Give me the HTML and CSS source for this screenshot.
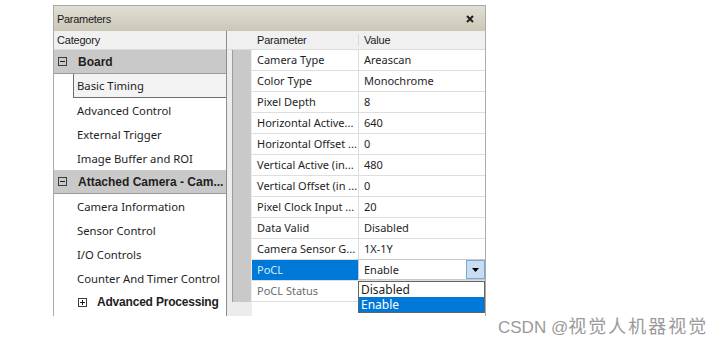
FILE: index.html
```html
<!DOCTYPE html>
<html lang="en">
<head>
    <meta charset="UTF-8">
    <title>Parameters</title>
    <link rel="stylesheet" href="styles.css">
</head>
<body>
    <div class="window">
        <div class="titlebar">
            <span class="title">Parameters</span>
            <svg class="close" width="8" height="8" viewBox="0 0 8 8"><path d="M1 1l6 6M7 1l-6 6" stroke="#222" stroke-width="2"/></svg>
        </div>
        <div class="panes">
            <div class="categories">
                <div class="head">Category</div>
                <div class="tree">
                    <div class="node group">
                        <svg class="toggle" width="9" height="9" viewBox="0 0 9 9"><rect x="0.5" y="0.5" width="8" height="8" fill="none" stroke="#3c3c3c"/><path d="M2 4.5h5" stroke="#1e1e1e"/></svg>
                        <span>Board</span>
                    </div>
                    <div class="node leaf selected">Basic Timing</div>
                    <div class="node leaf">Advanced Control</div>
                    <div class="node leaf">External Trigger</div>
                    <div class="node leaf">Image Buffer and ROI</div>
                    <div class="node group">
                        <svg class="toggle" width="9" height="9" viewBox="0 0 9 9"><rect x="0.5" y="0.5" width="8" height="8" fill="none" stroke="#3c3c3c"/><path d="M2 4.5h5" stroke="#1e1e1e"/></svg>
                        <span>Attached Camera - Cam...</span>
                    </div>
                    <div class="node leaf">Camera Information</div>
                    <div class="node leaf">Sensor Control</div>
                    <div class="node leaf">I/O Controls</div>
                    <div class="node leaf">Counter And Timer Control</div>
                    <div class="node subgroup">
                        <svg class="toggle" width="9" height="9" viewBox="0 0 9 9"><rect x="0.5" y="0.5" width="8" height="8" fill="none" stroke="#3c3c3c"/><path d="M2 4.5h5M4.5 2v5" stroke="#1e1e1e"/></svg>
                        <span>Advanced Processing</span>
                    </div>
                </div>
            </div>

            <div class="params">
                <div class="head">
                    <span class="col-name">Parameter</span>
                    <span class="col-value">Value</span>
                </div>
                <div class="grid-area">
                    <div class="rowheads"></div>
                    <div class="grid">
                        <div class="row"><div class="name">Camera Type</div><div class="value">Areascan</div></div>
                        <div class="row"><div class="name">Color Type</div><div class="value">Monochrome</div></div>
                        <div class="row"><div class="name">Pixel Depth</div><div class="value">8</div></div>
                        <div class="row"><div class="name">Horizontal Active...</div><div class="value">640</div></div>
                        <div class="row"><div class="name">Horizontal Offset ...</div><div class="value">0</div></div>
                        <div class="row"><div class="name">Vertical Active (in...</div><div class="value">480</div></div>
                        <div class="row"><div class="name">Vertical Offset (in ...</div><div class="value">0</div></div>
                        <div class="row"><div class="name">Pixel Clock Input ...</div><div class="value">20</div></div>
                        <div class="row"><div class="name">Data Valid</div><div class="value">Disabled</div></div>
                        <div class="row"><div class="name">Camera Sensor G...</div><div class="value">1X-1Y</div></div>
                        <div class="row active">
                            <div class="name">PoCL</div>
                            <div class="value combo">
                                <span class="combo-text">Enable</span>
                                <span class="combo-btn">
                                    <svg width="7" height="4" viewBox="0 0 7 4"><path d="M0 0h7L3.5 4z" fill="#000"/></svg>
                                </span>
                                <div class="dropdown">
                                    <div class="option">Disabled</div>
                                    <div class="option picked">Enable</div>
                                </div>
                            </div>
                        </div>
                        <div class="row readonly"><div class="name">PoCL Status</div><div class="value"></div></div>
                    </div>
                </div>
            </div>
        </div>
    </div>

    <div class="watermark">CSDN @<span class="cjk">视觉人机器视觉</span></div>
</body>
</html>
```

FILE: styles.css
```css
body {
    margin: 0;
    background: #fff;
    font-family: "Noto Sans", sans-serif;
    font-size: 11px;
    color: #1e1e1e;
}

.window {
    margin: 5px 0 0 53px;
    width: 431px;
    border: 1px solid #ababab;
    border-bottom: none;
}
.titlebar {
    display: flex;
    align-items: center;
    justify-content: space-between;
    height: 25px;
    padding: 0 11px 0 3px;
    background: linear-gradient(#e1ded4, #cbc7b7);
    font-family: "Liberation Sans", sans-serif;
    font-size: 11px;
    letter-spacing: -0.3px;
    color: #1a1a1a;
}

.panes {
    display: flex;
    height: 285px;
}
.head {
    display: flex;
    align-items: center;
    height: 18px;
    background: #f0f0f0;
    border-bottom: 1px solid #dcdcdc;
    font-family: "Liberation Sans", sans-serif;
    font-size: 11px;
    letter-spacing: -0.2px;
    color: #1a1a1a;
}

/* left: category tree */
.categories {
    width: 172px;
    border-right: 1px solid #8c8c8c;
    background: #fff;
}
.categories .head { padding-left: 3px; }
.node {
    display: flex;
    align-items: center;
    height: 24px;
    box-sizing: border-box;
    white-space: nowrap;
    font-size: 11.3px;
}
.node.group {
    background: #c9c9c9;
    border-bottom: 1px solid #9a9a9a;
    padding-left: 4px;
    font-family: "Liberation Sans", sans-serif;
    font-size: 12px;
    font-weight: bold;
}
.node.group .toggle { margin-right: 11px; }
.node.leaf { padding-left: 23px; }
.node.selected {
    margin-left: 19px;
    padding-left: 3px;
    background: #f3f3f3;
    border-left: 1px solid #6e6e6e;
    border-bottom: 1px solid #6e6e6e;
}
.node.subgroup {
    padding-left: 24px;
    font-family: "Liberation Sans", sans-serif;
    font-size: 12px;
    font-weight: bold;
    letter-spacing: -0.2px;
}
.node.subgroup .toggle { margin-right: 10px; }

/* right: property grid */
.params {
    flex: 1;
    background: #fff;
}
.params .head .col-name {
    width: 101px;
    padding-left: 30px;
    border-right: 1px solid #d6d6d6;
}
.params .head .col-value { padding-left: 5px; }
.grid-area {
    display: flex;
    align-items: flex-start;
    padding-left: 5px;
    background: #ececec;
    height: 266px;
}
.rowheads {
    width: 18px;
    height: 252px;
    background: #c9c9c9;
    border-left: 1px solid #9c9c9c;
    border-right: 1px solid #ececec;
}
.grid {
    flex: 1;
    align-self: stretch;
    background: #fff;
}
.row {
    display: flex;
    height: 20px;
    border-bottom: 1px solid #dedede;
    line-height: 20px;
    white-space: nowrap;
}
.name {
    width: 101px;
    padding-left: 5px;
    border-right: 1px solid #dedede;
    overflow: hidden;
}
.value {
    flex: 1;
    padding-left: 5px;
    position: relative;
}
.row.active .name {
    background: #0078d7;
    color: #dcebf8;
}
.row.readonly .name { color: #6d6d6d; }

.combo {
    display: flex;
    justify-content: space-between;
    border: 1px solid #c8c8c8;
    border-right: none;
    margin: -1px 0 0 -1px;
    z-index: 2;
}
.combo-btn {
    display: flex;
    align-items: center;
    justify-content: center;
    width: 17px;
    background: #c8dcf2;
    border: 1px solid #78a8d8;
}
.dropdown {
    position: absolute;
    left: -1px;
    top: 21px;
    width: 125px;
    border: 1px solid #646464;
    background: #fff;
}
.option {
    height: 15px;
    line-height: 15px;
    padding-left: 2px;
    font-size: 12px;
}
.option.picked {
    background: #0078d7;
    color: #fff;
}

.watermark {
    position: absolute;
    left: 498px;
    top: 312px;
    font-family: "Liberation Sans", "Noto Sans CJK SC", sans-serif;
    font-size: 17px;
    color: #9a9a9a;
}
.cjk {
    font-family: "Noto Sans CJK SC", sans-serif;
    font-size: 18px;
    letter-spacing: 2px;
}
```
